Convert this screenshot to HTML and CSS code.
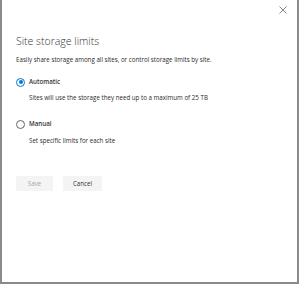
FILE: index.html
```
<!DOCTYPE html>
<html>
<head>
<meta charset="utf-8">
<link rel="stylesheet" href="styles.css">
</head>
<body>
<div class="dialog">
  <button class="close" aria-label="Close">
    <svg width="8" height="8" viewBox="0 0 8 8"><path d="M0.5 0.5 L7.5 7.5 M7.5 0.5 L0.5 7.5" stroke="#666" stroke-width="0.8" fill="none"/></svg>
  </button>
  <h1 class="title">Site storage limits</h1>
  <p class="desc">Easily share storage among all sites, or control storage limits by site.</p>
  <div class="option">
    <div class="option-row">
      <span class="radio checked"></span>
      <span class="label">Automatic</span>
    </div>
    <p class="hint">Sites will use the storage they need up to a maximum of 25 TB</p>
  </div>
  <div class="option">
    <div class="option-row">
      <span class="radio"></span>
      <span class="label">Manual</span>
    </div>
    <p class="hint">Set specific limits for each site</p>
  </div>
  <div class="actions">
    <button class="btn disabled">Save</button>
    <button class="btn">Cancel</button>
  </div>
</div>
</body>
</html>
```
FILE: styles.css
```
html, body {
  margin: 0;
  padding: 0;
  background: #fff;
}
.dialog {
  box-sizing: border-box;
  width: 299px;
  height: 284px;
  border-left: 2px solid #8a8a8a;
  border-right: 2px solid #8a8a8a;
  border-bottom: 2px solid #8a8a8a;
  padding: 0 14px;
  position: relative;
  font-family: "Open Sans", sans-serif;
  color: #333;
}
.close {
  position: absolute;
  top: 5px;
  right: 9px;
  width: 10px;
  height: 10px;
  padding: 0;
  border: 0;
  background: none;
  display: flex;
  align-items: center;
  justify-content: center;
}
.title {
  margin: 0;
  padding-top: 33px;
  font-size: 10.5px;
  font-weight: 300;
  line-height: 16px;
  color: #333;
}
.desc {
  margin: 6px 0 0;
  font-size: 6.2px;
  line-height: 10px;
  color: #2b2b2b;
}
.option {
  margin-top: 12px;
}
.option + .option {
  margin-top: 16px;
}
.option-row {
  display: flex;
  align-items: center;
  gap: 4px;
  height: 10px;
}
.radio {
  box-sizing: border-box;
  width: 9px;
  height: 9px;
  border-radius: 50%;
  border: 1px solid #666;
  position: relative;
}
.radio.checked {
  border-color: #0078d4;
}
.radio.checked::after {
  content: "";
  position: absolute;
  left: 1.5px;
  top: 1.5px;
  width: 4px;
  height: 4px;
  border-radius: 50%;
  background: #0078d4;
}
.label {
  font-size: 6.2px;
  font-weight: 600;
  line-height: 10px;
}
.hint {
  margin: 6px 0 0 13px;
  font-size: 6.2px;
  line-height: 10px;
  color: #2b2b2b;
}
.option + .option .hint {
  margin-top: 7px;
}
.actions {
  display: flex;
  gap: 10px;
  margin-top: 30px;
}
.btn {
  box-sizing: border-box;
  height: 15px;
  padding: 0;
  border: 0;
  background: #f4f4f4;
  font-family: "Open Sans", sans-serif;
  font-size: 6.2px;
  color: #333;
  width: 39px;
}
.btn.disabled {
  width: 37px;
  color: #a6a6a6;
}
```
